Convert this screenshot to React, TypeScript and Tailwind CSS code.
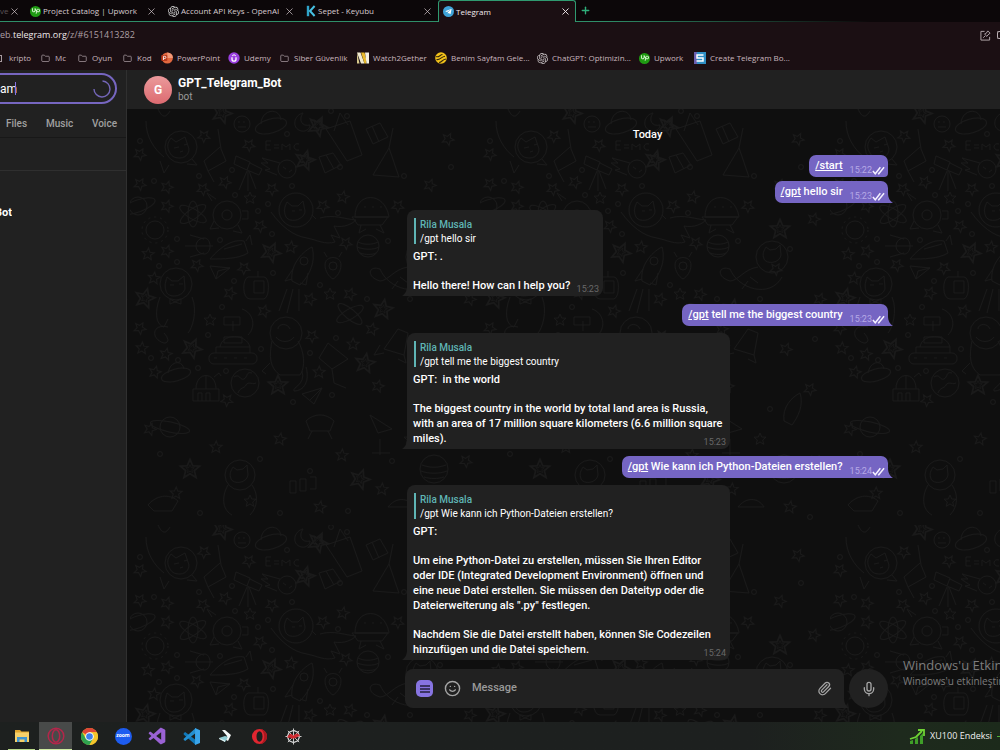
import type { ReactNode } from 'react';
import { Folder, Mic, Paperclip, Plus, Smile, X } from 'lucide-react';
import { FaTelegramPlane } from 'react-icons/fa';
import { SiOpenai, SiUpwork } from 'react-icons/si';
import { BiLogoVisualStudio } from 'react-icons/bi';

const UI_FONT = "font-['Open_Sans','Noto_Sans',sans-serif]";

function UpworkIcon() {
  return (
    <span className="flex size-[11px] shrink-0 items-center justify-center rounded-full bg-[#1f9a12] text-[#d9f5d4]">
      <SiUpwork className="size-2" />
    </span>
  );
}

function KeyubuIcon() {
  return (
    <svg viewBox="0 0 10 12" className="h-3 w-[10px] shrink-0" fill="none">
      <path d="M2 .8v10.4" stroke="#2fa3c9" strokeWidth="2.4" />
      <path d="M8.6 1 4 6l4.6 5" stroke="#46c1e3" strokeWidth="2" />
    </svg>
  );
}

function TelegramIcon() {
  return (
    <span className="flex size-[11px] shrink-0 items-center justify-center rounded-full bg-[#3fa3d8] text-white">
      <FaTelegramPlane className="size-[7px]" />
    </span>
  );
}

function PowerPointIcon() {
  return (
    <svg viewBox="0 0 12 12" className="size-3 shrink-0">
      <circle cx="6.3" cy="6" r="5.6" fill="#e2683f" />
      <path d="M6.3.4a5.600 5.600 0 0 1 5.600 5.600H6.300z" fill="#f29a78" />
      <rect x=".3" y="3" width="6" height="6" rx=".8" fill="#b83a1c" />
      <path d="M2.500 8V4.300h1.300a1.100 1.100 0 0 1 0 2.200H2.500" stroke="#fff" strokeWidth=".8" fill="none" />
    </svg>
  );
}

function UdemyIcon() {
  return (
    <svg viewBox="0 0 12 12" className="size-3 shrink-0" fill="none" stroke="#fff">
      <circle cx="6" cy="6" r="5.700" fill="#9a3fe0" stroke="none" />
      <path d="M4 5.200v2a2 2 0 0 0 4 0v-2" strokeWidth="1.300" />
      <path d="M4.200 3.800 6 2.700l1.800 1.100" strokeWidth="1" />
    </svg>
  );
}

function WatchIcon() {
  return (
    <svg viewBox="0 0 12 12" className="size-3 shrink-0">
      <path d="M0 .5h3.500l4 11H4z" fill="#f1ead0" />
      <path d="M4 .5h3.500l1.500 6 .5 5h-2z" fill="#e8b92c" />
      <path d="M8 .5h4v11H9.500z" fill="#f4f0e2" />
      <path d="M0 .5v11h2.500z" fill="#d8c88c" />
    </svg>
  );
}

function TurkcellIcon() {
  return (
    <svg viewBox="0 0 12 12" className="size-3 shrink-0" fill="none">
      <circle cx="6" cy="6" r="5.800" fill="#f2c21a" />
      <path d="M1 4.500c3 1.300 4-1.800 6.500-2M1.500 7.500C5 8.500 6 4.800 10 4.200M4 10.500C7 10.500 7 7.500 11 7" stroke="#33250c" strokeWidth="1.100" />
    </svg>
  );
}

function SIcon() {
  return (
    <svg viewBox="0 0 12 12" className="size-3 shrink-0" fill="none">
      <rect width="12" height="12" fill="#2f8fc4" />
      <path d="M0 0h3v12H0z" fill="#6a5fb0" />
      <path d="M9.500 3H3v3h6v3H2.500" stroke="#fff" strokeWidth="1.500" />
    </svg>
  );
}

const folder = <Folder className="h-[9px] w-[11px] shrink-0 text-[#a89ba0]" strokeWidth={2} />;

const TABS: { title: string; icon: ReactNode }[] = [
  { title: 'Project Catalog | Upwork', icon: <UpworkIcon /> },
  { title: 'Account API Keys - OpenAI', icon: <SiOpenai className="size-[11px] shrink-0 text-[#d0d0d0]" /> },
  { title: 'Sepet - Keyubu', icon: <KeyubuIcon /> },
];

const BOOKMARKS: { label: string; icon: ReactNode; width: string }[] = [
  { label: 'Mc', icon: folder, width: 'w-[37px]' },
  { label: 'Oyun', icon: folder, width: 'w-[45px]' },
  { label: 'Kod', icon: folder, width: 'w-[39px]' },
  { label: 'PowerPoint', icon: <PowerPointIcon />, width: 'w-[67px]' },
  { label: 'Udemy', icon: <UdemyIcon />, width: 'w-[51px]' },
  { label: 'Siber Güvenlik', icon: folder, width: 'w-[78px]' },
  { label: 'Watch2Gether', icon: <WatchIcon />, width: 'w-[78px]' },
  { label: 'Benim Sayfam Gele...', icon: <TurkcellIcon />, width: 'w-[102px]' },
  { label: 'ChatGPT: Optimizin...', icon: <SiOpenai className="size-[11px] shrink-0 text-[#c9c3c5]" />, width: 'w-[102px]' },
  { label: 'Upwork', icon: <UpworkIcon />, width: 'w-[55px]' },
  { label: 'Create Telegram Bo...', icon: <SIcon />, width: 'w-[110px]' },
];

function TabBar() {
  return (
    <div className="relative flex h-[22px] shrink-0 bg-[#0c0709] text-[8px] text-[#d6cbcf]">
      <div className="absolute inset-x-0 bottom-0 h-px bg-linear-to-r from-[#2f8f69] from-60% to-transparent to-87%" />
      <div className="flex w-6 shrink-0 items-center justify-between pr-[5px]">
        <span className="text-[#5c5356]">ve</span>
        <button aria-label="Close tab">
          <X className="size-[11px]" strokeWidth={1.5} />
        </button>
      </div>
      {TABS.map((tab) => (
        <div key={tab.title} className="flex w-[138px] shrink-0 items-center gap-[2px] pr-[5px] pl-[6px]">
          {tab.icon}
          <span className="whitespace-nowrap">{tab.title}</span>
          <button aria-label="Close tab" className="ml-auto">
            <X className="size-[11px]" strokeWidth={1.5} />
          </button>
        </div>
      ))}
      <div className="relative flex w-[138px] shrink-0 items-center gap-[2px] rounded-t-[3px] border border-b-0 border-[#2f9a70] bg-[#1b0f13] pr-1 pl-1 text-[#f2eaed]">
        <TelegramIcon />
        <span>Telegram</span>
        <button aria-label="Close tab" className="ml-auto">
          <X className="size-[11px]" strokeWidth={2} />
        </button>
      </div>
      <button aria-label="New tab" className="flex items-center pb-[2px] pl-1 text-[#2fae7a]">
        <Plus className="size-[11px]" strokeWidth={3} />
      </button>
    </div>
  );
}

function AddressBar() {
  return (
    <div className="flex h-[26px] shrink-0 items-center text-[9px] text-[#ad9fa4]">
      <span>
        eb.<span className="text-[#efe8ea]">telegram.org</span>/z/#6151413282
      </span>
      <button aria-label="Pin page" className="mr-[6px] ml-auto text-[#b9aeb2]">
        <svg viewBox="0 0 12 12" className="size-[11px]" fill="none" stroke="currentColor">
          <path d="M5 1.500H1v9.500h9.500V7.500" />
          <path d="m3.500 8.500 2-2M5 4.500 7.500 7l1-1.500 2.500-2L8.500 1 6.700 3.700z" />
        </svg>
      </button>
      <div className="h-2 w-[3px] shrink-0 rounded-l-xs border border-r-0 border-[#b9aeb2]" />
    </div>
  );
}

function Bookmarks() {
  return (
    <nav className="flex h-[22px] shrink-0 items-center overflow-hidden pb-[2px] text-[8px] whitespace-nowrap text-[#c8b6be]">
      <a href="#kripto" className="flex w-10 shrink-0 items-center">
        <span className="mr-[7px] h-[7px] w-[2px] border border-l-0 border-[#a89ba0]" />
        kripto
      </a>
      {BOOKMARKS.map((b) => (
        <a key={b.label} href="#bookmark" className={`flex shrink-0 items-center gap-[4px] ${b.width}`}>
          {b.icon}
          {b.label}
        </a>
      ))}
    </nav>
  );
}

function Sidebar() {
  return (
    <aside className="w-[127px] shrink-0 overflow-hidden border-r border-[#303030] bg-[#212121]">
      <div className="relative mt-[3px] mr-[9px] -ml-5 h-[31px] rounded-full border-2 border-[#7666c0]">
        <input
          aria-label="Search"
          defaultValue="am"
          className="h-full w-full bg-transparent pl-[18px] text-[12px] text-white outline-none"
        />
        <span className="absolute top-[7px] left-[33px] h-[13px] w-px bg-[#8774e1]" />
        <svg viewBox="0 0 18 18" className="absolute top-[5px] right-[4px] size-[18px]" fill="none" stroke="#7466b8" strokeWidth="1.400">
          <path d="M9.500 1A8 8 0 1 1 1 9" />
        </svg>
      </div>
      <div className="flex h-[34px] items-center justify-between border-b border-[#181818] pt-[5px] pr-[9px] pl-[6px] text-[10px] font-medium text-[#a0a0a0]">
        <button>Files</button>
        <button>Music</button>
        <button>Voice</button>
      </div>
      <div className="h-[33px] border-b border-[#2f2f2f]" />
      <div className="mt-[34px] flex w-3 justify-end overflow-hidden text-[11px] font-bold text-white">Bot</div>
    </aside>
  );
}

const STAR = 'M0-6 1.700-2 6-1.800 2.700 1 3.800 5.300 0 3-3.800 5.300-2.700 1-6-1.800-1.700-2Z';

const STARS = [
  [10, 45], [74, 27], [119, 36], [188, 16], [10, 75], [37, 78], [73, 80], [95, 73], [142, 80], [175, 50],
  [213, 88], [193, 97], [120, 89], [37, 97], [130, 117], [268, 97], [37, 142], [161, 138], [216, 134], [18, 145],
  [67, 156], [114, 159], [24, 169], [100, 184], [180, 190], [200, 185], [134, 202], [220, 185], [80, 211], [10, 219],
  [182, 227], [242, 220], [223, 235], [12, 239], [36, 245], [189, 263], [25, 263], [97, 291], [248, 277], [318, 30],
  [300, 76], [334, 110], [296, 160], [340, 190], [306, 240], [330, 280], [20, 320], [86, 338], [150, 330], [212, 346],
  [280, 330], [336, 352], [46, 384], [120, 392], [190, 398], [252, 380], [310, 398],
];

const BIG_STARS = [
  [188, 17], [141, 143], [175, 51], [15, 189], [62, 239], [148, 276], [253, 200], [235, 254], [92, 4], [300, 120], [60, 360], [230, 370],
];

const DOTS = [
  [10, 32], [157, 25], [201, 2], [217, 7], [102, 61], [69, 67], [24, 72], [105, 86], [162, 77], [210, 58],
  [138, 95], [128, 102], [47, 130], [90, 131], [142, 125], [208, 104], [258, 132], [47, 153], [29, 157], [104, 172],
  [143, 164], [190, 176], [92, 198], [237, 190], [78, 226], [21, 249], [48, 251], [131, 240], [206, 229], [180, 244],
  [68, 259], [202, 286], [163, 293], [96, 262], [274, 67], [321, 58], [310, 140], [280, 190], [335, 230], [290, 300],
  [130, 350], [30, 345], [180, 362], [262, 352], [70, 404], [150, 404], [330, 408], [218, 402],
];

// Space themed wallpaper, repeated over the whole chat
function Wallpaper() {
  return (
    <svg className="absolute inset-0 size-full" aria-hidden="true">
      <defs>
        <pattern id="doodles" width="350" height="416" patternUnits="userSpaceOnUse" x="3">
          <g fill="none" stroke="#1a1a1a" strokeWidth="1">
            {STARS.map(([x, y]) => (
              <path key={`s${x}-${y}`} d={STAR} transform={`translate(${x} ${y}) rotate(${(x * 7) % 40})`} />
            ))}
            {BIG_STARS.map(([x, y]) => (
              <g key={`b${x}-${y}`} transform={`translate(${x} ${y}) rotate(${(y * 5) % 30})`}>
                <path d={STAR} transform="scale(1.600)" />
                <path d={STAR} transform="scale(.7)" />
              </g>
            ))}
            {DOTS.map(([x, y]) => (
              <circle key={`d${x}-${y}`} cx={x} cy={y} r="2.500" />
            ))}
            {/* diving cat */}
            <circle cx="51" cy="38" r="16" />
            <path d="M39 42c-3-6 0-10 2-13l5 4 9-5 3 9c3 6-2 12-8 12s-9-2-11-7zM44 39l5-1M54 36l4-1M50 43l3-1M34 48c-10-8-18-20-18-36M30 52l4 12 5-8M28 0c4 9 8 9 12 2M62 50l5 6-10-1" />
            {/* ufo, moon and formula */}
            <ellipse cx="141" cy="17" rx="16" ry="7" transform="rotate(-15 141 17)" />
            <path d="M131 15c0-14 18-18 20-4M173 4c-9 2-12 15-2 18 6 1 9-3 9-6-8 2-12-5-7-12z" />
            <path d="M141 32h-5v9h5M136 36h4M144 36h5M144 39h5M152 41v-6l4 3 4-3v6M169 35c-6-2-7 7 0 6" />
            <circle cx="112" cy="15" r="8" />
            <path d="M109 12v2M114 12v2M108 18h8" />
            {/* constellations */}
            <path d="m88 20 3 20 5 12-18 10-4-10 16-14M78 62l6 11M243 66l16-27 10 29zM259 39l4-20M189 249l9-15 20 16-16 10zM202 260l2 14 12 5" />
            {/* telescope */}
            <path d="m106 47 14 6-3 8-13-6zM120 54l12 6-3 6-12-5M117 62l-8 19M118 62v20M119 62l7 18" />
            {/* comet */}
            <circle cx="157" cy="60" r="9" />
            <path d="m150 54-18-5 6 5h-7l9 6-5 1 12 5M153 58l3 2M159 63l3-2" />
            {/* satellite */}
            <path d="m196 20 24-8 12 34-15 6zM204 22l6-18 8 12M189 48l14-4 8 12-16 8zM196 46l8 14M236 20l14-6 8 14-15 7zM242 17l7 16" />
            {/* floating cat */}
            <circle cx="166" cy="101" r="17" />
            <path d="M156 108c-3-6-1-11 1-15l5 4h6l5-5 2 10c0 8-14 13-19 6zM162 102h3M169 101h3M141 103c10 14 22 24 36 26 10 2 18 7 28 4l-4-7 9 3-6-12c10 2 18-2 22-6-12-1-22-6-36-2M182 106l4 4" />
            {/* submarine rocket and bell pod */}
            <circle cx="97" cy="106" r="14" />
            <circle cx="97" cy="106" r="5" />
            <path d="m82 92-5-8 9 6M84 112l-4 8 9-1M108 116l4 8-9-2M112 102h6v8h-6M225 108c0-26 30-26 34 0zM222 108h36l-6 8h-24zM231 116l-2 8 7-4M250 116l4 8-8-4M234 98h2M242 98h2M250 98h2" />
            {/* saturn, sun, atom, radar */}
            <circle cx="8" cy="97" r="9" />
            <ellipse cx="8" cy="97" rx="18" ry="6" transform="rotate(-20 8 97)" />
            <circle cx="25" cy="121" r="9" />
            <circle cx="25" cy="121" r="13" strokeDasharray="2 4" />
            <ellipse cx="63" cy="105" rx="15" ry="5" transform="rotate(30 63 105)" />
            <ellipse cx="63" cy="105" rx="15" ry="5" transform="rotate(-35 63 105)" />
            <ellipse cx="63" cy="105" rx="5" ry="13" />
            <path d="M55 137h28M74 129a7 7 0 0 0 0 16c8 0 8-16 0-16zM60 126l14 4M60 148l14-4" />
            {/* shuttle and paper plane */}
            <path d="M80 150c12-14 24-20 34-18l4 12c-10 6-24 6-38 6zM94 140l18-5M116 132l4-6 2 10M80 157l20 2-14 11zM86 170l2-8 12-3M172 285l20-6-8 16zM180 291l12-12" />
            {/* rocket */}
            <path d="M162 172c-2-14 8-28 20-34 4 14-2 28-12 38zM163 160l-8 12 7-2M178 164l-2 12-6-2M157 180l-8 22M163 180l-6 24M169 180v22" />
            <circle cx="174" cy="152" r="4" />
            {/* banded planets */}
            <circle cx="238" cy="137" r="11" />
            <path d="M228 133c6 3 14 3 20 0M227 138c8 3 16 3 22 0M230 144c6 2 12 2 16 0" />
            {/* sitting cat */}
            <circle cx="46" cy="175" r="16" />
            <path d="M36 182c-2-6 0-10 1-14l5 4h6l6-5 1 12c-1 9-17 11-19 3zM40 176h4M49 175h4M30 188c-6 16-4 28 4 30l4-8M62 188c6 14 0 32-4 36M38 218c-16-4-18 12-4 16 6 0 4-6 0-10M40 190l5 3 6-3v5l-6-2-5 2z" />
            {/* astronaut helmet, alien */}
            <path d="M118 168h16c6 0 6 20 0 22h-14c-8 0-8-20-2-22zM124 172h10v12h-10zM128 168v-6" />
            <path d="M195 156c0-10 16-10 16 0 0 6-4 12-8 14-4-2-8-8-8-14zM197 148l-3-5M209 148l3-5" />
            <circle cx="203" cy="157" r="4" />
            {/* rover */}
            <rect x="79" y="244" width="48" height="11" rx="5" />
            <path d="M86 244v-6h34v6M90 238c2-14 26-14 30 0M94 228h18v6H94zM103 222v-10M94 208h16v8H94zM112 200c12 4 14 18 6 26" />
            <path d="M84 249h3M94 249h3M104 249h3M114 249h3" />
            {/* upright cat */}
            <circle cx="156" cy="224" r="16" />
            <path d="M148 220c0-6 10-6 12 0M146 228c4 6 14 6 18 0M142 232c-4 20 0 28 8 34h20c6-8 4-24-2-34M140 254l-8 8 4 3M172 262c4 14-10 16-8 20 10 0 16-10 12-24" />
            {/* observatory and earth */}
            <path d="M63 292v-12h26v12zM66 280c0-18 20-18 20 0M68 292v-8h4v8M76 292v-8h4v8M76 266v14M84 268l5-4 2 3" />
            <circle cx="115" cy="274" r="14" />
            <path d="M104 268c6-4 6 4 10 2s2-8 8-6M108 284c2-6 6-4 8-8s8 0 10-2" />
            <ellipse cx="46" cy="266" rx="15" ry="6" transform="rotate(-15 46 266)" />
            <path d="M38 264c2-12 14-14 16-4" />
            {/* resting cat */}
            <circle cx="292" cy="148" r="16" />
            <path d="M284 150c-2-6 0-8 2-12l4 3 6-1 4-4 1 10c-1 8-14 10-17 4zM278 158c-14 2-20 14-28 14-14-4-12-16 0-12 8 20 40 30 52 8M270 168l8 6M262 180l6-8" />
            <path d="m254 240 14-20 10 4-4 22zM250 236l-6 10 10-2M274 246l2 8-8-4" />
            <ellipse cx="220" cy="205" rx="15" ry="5" transform="rotate(40 220 205)" />
            <ellipse cx="220" cy="205" rx="15" ry="5" transform="rotate(-30 220 205)" />
            {/* lower band */}
            <circle cx="40" cy="318" r="10" />
            <ellipse cx="40" cy="318" rx="20" ry="5" transform="rotate(12 40 318)" />
            <circle cx="110" cy="366" r="15" />
            <path d="M101 370c-2-6 0-8 2-12l4 3 6-1 4-4 1 10c-1 8-14 10-17 4zM98 376c-8 14-4 26 4 30M122 376c8 12 4 24-2 30" />
            <path d="M176 312c8-8 20-8 28 0l-4 10h-20zM182 322l-4 8M198 322l4 8M240 306l22 14-14 4zM250 330v16M242 344h18" />
            <circle cx="304" cy="360" r="14" />
            <path d="M292 356c8 3 16 3 24 0M291 362c8 3 18 3 26 0M294 368c6 2 14 2 20 0M304 312c-2-14 8-24 16-28 4 12-2 24-8 32z" />
            <path d="M18 396c10-12 24-10 30-4l-6 10H24zM160 372h6v12h-6zM170 370h6v12h-6zM180 368h6v12h-6M258 398c8-10 20-10 26 0z" />
          </g>
        </pattern>
      </defs>
      <rect width="100%" height="100%" fill="url(#doodles)" />
    </svg>
  );
}

function Ticks() {
  return (
    <svg viewBox="0 0 14 9" className="h-[9px] w-[13px]" fill="none" stroke="#f4f1ff" strokeWidth="1.600">
      <path d="m1 5 2.500 3L9 1M6.500 7.500l.8.500L13 1" />
    </svg>
  );
}

function Outgoing({ command, text, time, tail }: { command: string; text?: string; time: string; tail?: boolean }) {
  return (
    <div
      className={`relative flex h-[22px] items-center self-end rounded-[7px] bg-[#7565c3] pr-[3px] pl-[6px] text-[11px] font-medium text-white ${
        tail ? 'rounded-br-none' : 'rounded-br-[4px]'
      }`}
    >
      <p>
        <a href="#command" className="underline">
          {command}
        </a>
        {text && ` ${text}`}
      </p>
      <span className="ml-[7px] flex items-center self-end text-[9px] leading-[14px] font-normal text-[#b5a9e6]">
        {time}
        <Ticks />
      </span>
      {tail && (
        <svg viewBox="0 0 5 10" className="absolute bottom-0 left-full h-[10px] w-[5px]" fill="#7565c3">
          <path d="M0 0c0 5 2 8 5 10H0z" />
        </svg>
      )}
    </div>
  );
}

function Incoming({ quote, blocks, time, width }: { quote: string; blocks: string[]; time: string; width: string }) {
  return (
    <div className={`relative max-w-full self-start rounded-[8px] rounded-bl-none bg-[#212121] px-[6px] pt-[7px] pb-[3px] text-white ${width}`}>
      <blockquote className="relative mb-[3px] pt-px pl-[7px] text-[10px] leading-[14px] font-medium">
        <span className="absolute top-px left-px h-[26px] w-[2px] bg-[#5fb5b5]" />
        <div className="text-[#5fb5b5]">Rila Musala</div>
        <div className="font-normal">{quote}</div>
      </blockquote>
      <div className="space-y-[14px] text-[11px] leading-[15px] font-medium whitespace-pre-wrap">
        {blocks.map((b) => (
          <p key={b}>{b}</p>
        ))}
      </div>
      <span className="absolute right-[4px] bottom-0 text-[9px] leading-[13px] text-[#686868]">{time}</span>
      <svg viewBox="0 0 5 10" className="absolute right-full bottom-0 h-[10px] w-[5px]" fill="#212121">
        <path d="M5 0c0 5-2 8-5 10h5z" />
      </svg>
    </div>
  );
}

function Composer() {
  return (
    <div className="mt-[9px] -ml-[2px] flex gap-[5px]">
      <div className="relative flex h-[39px] flex-1 items-center rounded-[8px] rounded-br-none bg-[#212121] pr-[12px] pl-[11px]">
        <button aria-label="Bot menu" className="flex size-[17px] items-center justify-center rounded-[5px] bg-[#8774e1]">
          <svg viewBox="0 0 10 8" className="h-2 w-[10px]" stroke="#251f3d" strokeWidth="1.300">
            <path d="M0 1h10M0 4h10M0 7h10" />
          </svg>
        </button>
        <button aria-label="Emoji" className="ml-[11px] text-[#a5a5a5]">
          <Smile className="size-[17px]" strokeWidth={2} />
        </button>
        <input
          aria-label="Message"
          placeholder="Message"
          className="mx-[11px] min-w-0 flex-1 bg-transparent text-[11px] font-medium text-white outline-none placeholder:text-[#9a9a9a]"
        />
        <button aria-label="Attach file" className="text-[#a5a5a5]">
          <Paperclip className="size-[15px]" strokeWidth={2} />
        </button>
        <svg viewBox="0 0 5 10" className="absolute bottom-0 left-full h-[10px] w-[5px]" fill="#212121">
          <path d="M0 0c0 5 2 8 5 10H0z" />
        </svg>
      </div>
      <button aria-label="Record voice message" className="flex size-[39px] items-center justify-center rounded-full bg-[#212121] text-[#a5a5a5]">
        <Mic className="size-4" strokeWidth={2} />
      </button>
    </div>
  );
}

function Chat() {
  return (
    <main className="flex min-w-0 flex-1 flex-col">
      <header className="relative z-10 flex h-[39px] shrink-0 items-center bg-[#212121] pl-[17px]">
        <span className="flex size-7 items-center justify-center rounded-full bg-linear-to-b from-[#eb9a9c] to-[#dc6a70] text-[12px] font-bold text-white">
          G
        </span>
        <div className="ml-[6px] leading-[13px]">
          <h1 className="text-[12px] font-bold text-white">GPT_Telegram_Bot</h1>
          <p className="text-[10px] text-[#9a9a9a]">bot</p>
        </div>
      </header>
      <div className="relative flex-1 bg-[#0f0f0f]">
        <Wallpaper />
        <div className="relative flex w-[761px] max-w-full flex-col pt-[18px] pb-[14px] pl-[280px]">
          <div className="mb-[13px] text-center text-[11px] leading-[15px] font-medium text-white">Today</div>
          <Outgoing command="/start" time="15:22" />
          <div className="h-1" />
          <Outgoing command="/gpt" text="hello sir" time="15:23" tail />
          <div className="h-[7px]" />
          <Incoming quote="/gpt hello sir" blocks={['GPT: .', 'Hello there! How can I help you?']} time="15:23" width="w-[196px]" />
          <div className="h-2" />
          <Outgoing command="/gpt" text="tell me the biggest country" time="15:23" tail />
          <div className="h-[7px]" />
          <Incoming
            quote="/gpt tell me the biggest country"
            blocks={[
              'GPT:  in the world',
              'The biggest country in the world by total land area is Russia, with an area of 17 million square kilometers (6.6 million square miles).',
            ]}
            time="15:23"
            width="w-[323px]"
          />
          <div className="h-[7px]" />
          <Outgoing command="/gpt" text="Wie kann ich Python-Dateien erstellen?" time="15:24" tail />
          <div className="h-[7px]" />
          <Incoming
            quote="/gpt Wie kann ich Python-Dateien erstellen?"
            blocks={[
              'GPT:',
              'Um eine Python-Datei zu erstellen, müssen Sie Ihren Editor oder IDE (Integrated Development Environment) öffnen und eine neue Datei erstellen. Sie müssen den Dateityp oder die Dateierweiterung als ".py" festlegen.',
              'Nachdem Sie die Datei erstellt haben, können Sie Codezeilen hinzufügen und die Datei speichern.',
            ]}
            time="15:24"
            width="w-[323px]"
          />
          <Composer />
        </div>
        <div className={`absolute bottom-[34px] left-[776px] whitespace-nowrap text-[#7d7d7d] ${UI_FONT}`}>
          <p className="text-[13px] leading-[18px]">Windows'u Etkinleştir</p>
          <p className="text-[10px] leading-[14px]">Windows'u etkinleştirmek için Ayarlar'a gidin.</p>
        </div>
      </div>
    </main>
  );
}

function ExplorerIcon() {
  return (
    <svg viewBox="0 0 16 14" className="h-[14px] w-4">
      <path d="M1 1h5l1.500 1.500H15v3H1z" fill="#e0a52e" />
      <path d="M1 3.500h14V13H1z" fill="#f6d06a" />
      <path d="M3 13V8h10v5h-2.500v-2.500h-5V13z" fill="#3f93cf" />
    </svg>
  );
}

function OperaGxIcon() {
  return (
    <svg viewBox="0 0 18 18" className="size-[18px]" fill="none" stroke="#b3264a">
      <circle cx="9" cy="9" r="7.800" strokeWidth="1.500" />
      <ellipse cx="9" cy="9" rx="3.700" ry="6.200" strokeWidth="1.500" />
    </svg>
  );
}

function OperaIcon() {
  return (
    <svg viewBox="0 0 18 18" className="size-[17px]">
      <path fillRule="evenodd" d="M9 1a8 8 0 1 0 0 16A8 8 0 1 0 9 1zm0 2.500c1.900 0 3.200 2.400 3.200 5.500s-1.300 5.500-3.200 5.500S5.800 12.100 5.800 9 7.100 3.500 9 3.500z" fill="#e02630" />
      <path d="M9 1c4.500 0 8 3.600 8 8s-3.500 8-8 8c3-.5 5-4 5-8s-2-7.500-5-8z" fill="#a81820" />
    </svg>
  );
}

function ChromeIcon() {
  return (
    <svg viewBox="0 0 24 24" className="size-[17px]">
      <circle cx="12" cy="12" r="12" fill="#f4c52c" />
      <path d="M12 12 1.600 6A12 12 0 0 1 22.400 6H12z" fill="#dd4537" />
      <path d="M1.600 6A12 12 0 0 0 12 24l5.200-9L12 12 6.800 15z" fill="#2fa34f" />
      <path d="M12 6h10.400A12 12 0 0 1 12 24l5.200-9z" fill="#f4c52c" />
      <circle cx="12" cy="12" r="6" fill="#fff" />
      <circle cx="12" cy="12" r="4.700" fill="#3f80ea" />
    </svg>
  );
}

function CodeIcon() {
  return (
    <svg viewBox="0 0 24 24" className="size-[17px]">
      <path d="m1 7.500 2-1.700L18 17v7L1 9z" fill="#1178b8" />
      <path d="m1 16.500 2 1.700L18 7V0L1 15z" fill="#238fd0" />
      <path d="m17 0 7 3v18l-7 3z" fill="#3aa5ea" />
    </svg>
  );
}

function DocIcon() {
  return (
    <svg viewBox="0 0 14 14" className="size-[14px]">
      <path d="m4 1 3 0 6 5-3 6-2-1 1-4z" fill="#f3f7f7" />
      <path d="m1 9 6-2 3 1-3 5z" fill="#8fcbd3" />
      <path d="m1 9 6 2.500V13l-6-3z" fill="#dceff0" />
    </svg>
  );
}

function WebIcon() {
  return (
    <svg viewBox="0 0 18 18" className="size-[17px]" fill="none" stroke="#d2d2d2">
      <path d="M9 .5v17M.5 9h17M3 3l12 12M15 3 3 15" />
      <path d="m9 2.500 4.600 1.900L15.500 9l-1.900 4.600L9 15.500l-4.600-1.900L2.500 9l1.900-4.600z" strokeWidth="1.300" />
      <path d="M3 10c1-4 4-4 6-1.500 3-3 5-2.500 6.500 0-2.500-1-3.500 3-6.500 2-2 1.500-4-2-6-.5z" fill="#d02a30" stroke="#d02a30" />
    </svg>
  );
}

const APPS: { name: string; icon: ReactNode }[] = [
  { name: 'Chrome', icon: <ChromeIcon /> },
  {
    name: 'Zoom',
    icon: (
      <span className="flex size-[17px] items-center justify-center rounded-full bg-[#1d5cf0] text-[5px] font-bold text-white">zoom</span>
    ),
  },
  { name: 'Visual Studio', icon: <BiLogoVisualStudio className="size-5 text-[#9a62d4]" /> },
  { name: 'Visual Studio Code', icon: <CodeIcon /> },
  { name: 'Documents', icon: <DocIcon /> },
  { name: 'Opera', icon: <OperaIcon /> },
  { name: 'Spider', icon: <WebIcon /> },
];

function Taskbar() {
  return (
    <footer className={`flex h-7 shrink-0 items-stretch bg-linear-to-r from-[#1d201f] from-75% via-[#1e2a1d] via-90% to-[#1c2a1b] pl-1 ${UI_FONT}`}>
      <button aria-label="File Explorer" className="relative flex w-[35px] items-center justify-center">
        <ExplorerIcon />
        <span className="absolute inset-x-1 bottom-0 h-px bg-[#b8d98a]" />
      </button>
      <button aria-label="Opera GX" className="flex w-[33px] items-center justify-center border-b border-[#cdeaa0] bg-[#484a49]">
        <OperaGxIcon />
      </button>
      {APPS.map((app) => (
        <button key={app.name} aria-label={app.name} className="flex w-[34px] items-center justify-center">
          {app.icon}
        </button>
      ))}
      <button className="ml-auto flex items-center gap-[5px] text-[9px] whitespace-nowrap text-[#efefef]">
        <svg viewBox="0 0 16 15" className="h-[15px] w-4">
          <path d="M1 15v-3l3-1v4zM6 15v-5l3-2v7zM11 15V7l3-3v11z" fill="#3f9e28" />
          <path d="m1 10 6-2 6-6M9 1h6v6" stroke="#6fd335" strokeWidth="1.800" fill="none" />
        </svg>
        XU100 Endeksi
        <span className="h-px w-[3px] bg-[#4fae3a]" />
      </button>
    </footer>
  );
}

export default function App() {
  return (
    <div className="flex min-h-screen flex-col overflow-hidden bg-[#1b0f13] font-[Roboto,sans-serif]">
      <div className={UI_FONT}>
        <TabBar />
        <AddressBar />
        <Bookmarks />
      </div>
      <div className="flex flex-1">
        <Sidebar />
        <Chat />
      </div>
      <Taskbar />
    </div>
  );
}
